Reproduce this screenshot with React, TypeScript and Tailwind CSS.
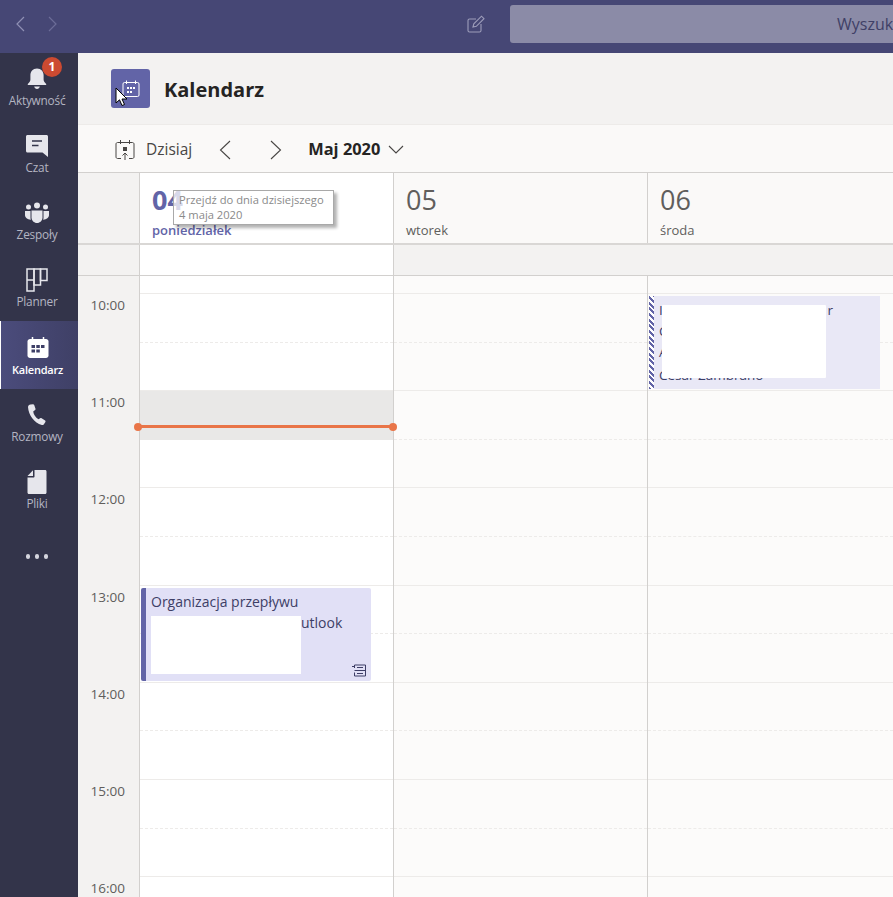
import type { ReactNode } from "react";

const font = "font-['Open_Sans','Noto_Sans',sans-serif]";

function BellIcon() {
  return (
    <svg width="24" height="24" viewBox="0 0 24 24" fill="#e6e6ec">
      <path d="M12 1.500c-4.200 0-6.600 3-6.600 6.800v4.200c0 1.600-1 2.800-2.400 4.200-.6.600-.3 1.300.5 1.300h17c.8 0 1.100-.7.500-1.300-1.400-1.400-2.400-2.600-2.400-4.200V8.300c0-3.800-2.400-6.800-6.600-6.800z" />
      <path d="M9.200 19.500h5.600c-.3 1.500-1.400 2.500-2.800 2.500s-2.500-1-2.800-2.500z" />
    </svg>
  );
}

function ChatIcon() {
  return (
    <svg width="24" height="24" viewBox="0 0 24 24">
      <path d="M2.500 1h19c.8 0 1.500.7 1.500 1.500V23l-5.500-4.500h-15c-.8 0-1.500-.7-1.500-1.500V2.500C1 1.700 1.700 1 2.500 1z" fill="#e6e6ec" />
      <path d="M7 7h10M7 11.500h6.500" stroke="#33344a" strokeWidth="1.500" />
    </svg>
  );
}

function TeamsIcon() {
  return (
    <svg width="26" height="22" viewBox="0 0 26 22" fill="#e6e6ec">
      <circle cx="13" cy="3.500" r="3" />
      <circle cx="4.500" cy="5" r="2.500" />
      <circle cx="21.500" cy="5" r="2.500" />
      <path d="M7.500 8.500h11v7c0 3-2.500 5.500-5.500 5.500s-5.500-2.500-5.500-5.500z" />
      <path d="M1 9h5.500v6.500c0 .8.100 1.500.4 2.200C3.500 17.800 1 15.500 1 13z" />
      <path d="M25 9h-5.500v6.500c0 .8-.1 1.500-.4 2.200 3.400.1 5.900-2.200 5.900-4.700z" />
    </svg>
  );
}

function PlannerIcon() {
  return (
    <svg width="22" height="24" viewBox="0 0 22 24" fill="none" stroke="#e6e6ec" strokeWidth="1.500">
      <rect x="1" y="1" width="7" height="22" />
      <path d="M1 12h7" />
      <rect x="8" y="1" width="6.500" height="16" />
      <rect x="14.500" y="1" width="6.500" height="11.500" />
    </svg>
  );
}

function CalendarIcon() {
  return (
    <svg width="22" height="22" viewBox="0 0 22 22">
      <path d="M3 2h16c1.300 0 2.500 1.200 2.500 2.500v14c0 1.300-1.200 2.500-2.500 2.500H3c-1.300 0-2.500-1.200-2.500-2.500v-14C.500 3.200 1.700 2 3 2z" fill="#ffffff" />
      <path d="M5.500 0v3M16.500 0v3" stroke="#ffffff" strokeWidth="1.500" />
      <path d="M4.500 8h3.500v3H4.500zM9.300 8h3.500v3H9.300zM14 8h3.500v3H14zM4.500 12.500h3.500v3H4.500zM9.300 12.500h3.500v3H9.300z" fill="#3d3e66" />
    </svg>
  );
}

function PhoneIcon() {
  return (
    <svg width="20" height="22" viewBox="0 0 20 22" fill="#e6e6ec">
      <path d="M3.500.500 6 .200c.6 0 1 .3 1.200.8l1.300 3.700c.2.500 0 1-.4 1.300L6.200 7.500c.4 3 2.300 6 5.200 7.800l1.800-1.100c.4-.3 1-.3 1.400 0l3.500 2.300c.5.300.6.900.3 1.400l-1.500 2.300c-.5.700-1.300 1-2.100.8C7.300 18.900 1.500 11 1 3c0-1.200 1.200-2.300 2.500-2.500z" />
    </svg>
  );
}

function FileIcon() {
  return (
    <svg width="20" height="24" viewBox="0 0 20 24" fill="#e6e6ec">
      <path d="M7.500 0H18c1 0 1.500.6 1.500 1.500v21c0 .9-.5 1.500-1.500 1.500H2c-1 0-1.500-.6-1.500-1.500V7.500h6c.6 0 1-.4 1-1z" />
      <path d="M6 .300V6H.500z" />
    </svg>
  );
}

function NavItem({ icon, label, active }: { icon: ReactNode; label: string; active?: boolean }) {
  return (
    <div
      className={
        active
          ? "flex h-[68px] flex-col items-center justify-center border-l border-white bg-gradient-to-r from-[#4b4c7c] to-[#3f4066] pr-[4px] text-white"
          : "flex h-[67px] flex-col items-center justify-center pr-[4px] text-[#b4b4c2]"
      }
    >
      <div className="flex h-[28px] items-center justify-center">{icon}</div>
      <span className={`leading-[15px] tracking-[-0.2px] ${active ? "text-[11px] font-semibold" : "text-[11.800px]"}`}>
        {label}
      </span>
    </div>
  );
}

function DayHeader({ num, name, today, last }: { num: string; name: string; today?: boolean; last?: boolean }) {
  return (
    <div
      className={
        today
          ? "w-[254px] shrink-0 border-r border-[#d2d0ce] bg-white pl-3 pt-[9px] text-[#6264a7]"
          : `min-w-0 flex-1 pl-3 pt-[9px] text-[#605e5c] ${last ? "" : "border-r border-[#d2d0ce]"}`
      }
    >
      <div className={`text-[27px] leading-[36px] ${today ? "font-bold" : "font-medium"}`}>{num}</div>
      <div className={`mt-[4px] text-[13px] leading-[17px] ${today ? "font-semibold" : ""}`}>{name}</div>
    </div>
  );
}

const hours = ["10:00", "11:00", "12:00", "13:00", "14:00", "15:00", "16:00"];
const slots = Array.from({ length: 13 }, (_, i) => i);

function DayColumn({ children, today, grow }: { children?: ReactNode; today?: boolean; grow?: boolean }) {
  return (
    <div
      className={`relative ${grow ? "min-w-0 flex-1" : "w-[254px] shrink-0 border-r border-[#d2d0ce]"} ${
        today ? "z-10 bg-white" : "bg-[#fcfbfa]"
      }`}
    >
      <div className="h-[18px] border-b border-[#edebe9]" />
      {slots.map((i) => (
        <div
          key={i}
          className={`h-[48.620px] border-b border-[#edebe9] ${i % 2 === 0 ? "border-dashed" : "border-solid"}`}
        />
      ))}
      {children}
    </div>
  );
}

export default function App() {
  return (
    <div className={`flex h-[897px] w-[893px] flex-col overflow-hidden bg-[#f3f2f1] ${font}`}>
      {/* top bar */}
      <div className="flex h-[53px] shrink-0 items-center bg-[#464775] pb-[5px]">
        <div className="ml-[14px] flex items-center gap-[21px]">
          <svg width="12" height="16" viewBox="0 0 12 16" fill="none" stroke="#8f90b4" strokeWidth="1.200">
            <path d="M10 1 3 8l7 7" />
          </svg>
          <svg width="12" height="16" viewBox="0 0 12 16" fill="none" stroke="#6c6d98" strokeWidth="1.200">
            <path d="m2 1 7 7-7 7" />
          </svg>
        </div>
        <svg className="ml-[407px]" width="19" height="18" viewBox="0 0 19 18" fill="none" stroke="#9d9dba" strokeWidth="1.100">
          <path d="M15 9v6.500c0 .8-.6 1.500-1.500 1.500h-10C2.600 17 2 16.300 2 15.500v-10C2 4.600 2.600 4 3.500 4H10" />
          <path d="M7 12l.8-3.200L15.500 1.200 18 3.700l-7.700 7.600z" />
        </svg>
        <div className="ml-[25px] flex h-[38px] min-w-0 flex-1 items-center rounded-l-[3px] bg-[#8b8ba7] pl-[327px]">
          <span className="whitespace-nowrap text-[16px] text-[#3f4066]">Wyszuk</span>
        </div>
      </div>

      <div className="flex min-h-0 flex-1">
        {/* left rail */}
        <nav className="flex w-[78px] shrink-0 flex-col bg-[#33344a]">
          <div className="relative">
            <NavItem icon={<BellIcon />} label="Aktywność" />
            <span className="absolute left-[42px] top-[4px] flex h-[20px] w-[20px] items-center justify-center rounded-full bg-[#cc4a31] text-[12px] font-bold text-white">
              1
            </span>
          </div>
          <NavItem icon={<ChatIcon />} label="Czat" />
          <NavItem icon={<TeamsIcon />} label="Zespoły" />
          <NavItem icon={<PlannerIcon />} label="Planner" />
          <NavItem icon={<CalendarIcon />} label="Kalendarz" active />
          <NavItem icon={<PhoneIcon />} label="Rozmowy" />
          <NavItem icon={<FileIcon />} label="Pliki" />
          <div className="flex h-[67px] items-center justify-center gap-[4.500px] pr-[4px]">
            <span className="h-[4.500px] w-[4.500px] rounded-full bg-[#d5d5de]" />
            <span className="h-[4.500px] w-[4.500px] rounded-full bg-[#d5d5de]" />
            <span className="h-[4.500px] w-[4.500px] rounded-full bg-[#d5d5de]" />
          </div>
        </nav>

        <main className="relative flex min-w-0 flex-1 flex-col">
          {/* page title */}
          <div className="flex h-[72px] shrink-0 items-center border-b border-[#edebe9] pl-[33px]">
            <div className="flex h-[39px] w-[39px] items-center justify-center rounded-[3px] bg-[#6264a7]">
              <svg width="18" height="18" viewBox="0 0 18 18" fill="none" stroke="#ffffff" strokeWidth="1">
                <rect x="1" y="2.500" width="16" height="14" rx="1.500" />
                <path d="M4.500 .500v3.500M13.500 .500v3.500" />
                <path d="M5 7h2v2H5zM8 7h2v2H8zM11 7h2v2h-2zM5 11h2v2H5zM8 11h2v2H8z" fill="#ffffff" stroke="none" />
              </svg>
            </div>
            <h1 className="ml-[14px] mt-[2px] text-[20px] font-bold text-[#252423]">Kalendarz</h1>
          </div>

          {/* toolbar */}
          <div className="flex h-[48px] shrink-0 items-center border-b border-[#d2d0ce] bg-[#faf9f8] pl-[37px] pt-[2px] text-[#252423]">
            <svg width="20" height="22" viewBox="0 0 20 22" fill="none" stroke="#484644" strokeWidth="1">
              <path d="M6 3.500H2.500c-.8 0-1.500.7-1.500 1.500v13c0 .8.700 1.500 1.500 1.500H6M14 19.500h3.500c.8 0 1.500-.7 1.500-1.500V5c0-.8-.7-1.500-1.500-1.500H14M6 3.500h8" />
              <path d="M5.500 1v4M14.500 1v4M10 21v-7M7.500 16.500 10 14l2.500 2.500" />
              <rect x="8" y="8" width="4" height="4" fill="#484644" stroke="none" />
            </svg>
            <span className="ml-[11px] text-[15.500px] text-[#484644]">Dzisiaj</span>
            <svg className="ml-[27px]" width="12" height="20" viewBox="0 0 12 20" fill="none" stroke="#484644" strokeWidth="1.100">
              <path d="M11 1 1.500 10 11 19" />
            </svg>
            <svg className="ml-[39px]" width="12" height="20" viewBox="0 0 12 20" fill="none" stroke="#484644" strokeWidth="1.100">
              <path d="m1 1 9.500 9L1 19" />
            </svg>
            <span className="ml-[26px] text-[16.400px] font-bold">Maj 2020</span>
            <svg className="ml-[8px]" width="16" height="9" viewBox="0 0 16 9" fill="none" stroke="#484644" strokeWidth="1.100">
              <path d="m1 1 7 7 7-7" />
            </svg>
          </div>

          {/* day headers */}
          <div className="flex h-[72px] shrink-0 border-b-2 border-[#d9d7d5] bg-[#faf9f8]">
            <div className="w-[62px] shrink-0 border-r border-[#d2d0ce] bg-[#f3f2f1]" />
            <DayHeader num="04" name="poniedziałek" today />
            <div className="flex w-[254px] shrink-0">
              <DayHeader num="05" name="wtorek" />
            </div>
            <DayHeader num="06" name="środa" last />
          </div>

          {/* all-day row */}
          <div className="flex h-[31px] shrink-0 border-b border-[#d2d0ce]">
            <div className="w-[62px] shrink-0 border-r border-[#d2d0ce]" />
            <div className="w-[254px] shrink-0 border-r border-[#d2d0ce] bg-white" />
            <div className="flex-1 bg-[#f3f2f1]" />
          </div>

          {/* time grid */}
          <div className="flex min-h-0 flex-1 overflow-hidden">
            <div className="w-[62px] shrink-0 border-r border-[#d2d0ce] bg-[#f3f2f1] pt-[18px] text-[#605e5c]">
              {hours.map((h) => (
                <div key={h} className="h-[97.240px] pr-[14px] pt-[1px] text-right text-[13.500px] leading-[20px]">
                  {h}
                </div>
              ))}
            </div>

            <DayColumn today>
              <div className="absolute inset-x-0 top-[115px] h-[49px] bg-[#e9e8e7]" />
              <div className="absolute left-0 right-0 top-[149px] h-[3px] bg-[#e97548]" />
              <div className="absolute left-[-6px] top-[146.500px] h-[8px] w-[8px] rounded-full bg-[#e97548]" />
              <div className="absolute right-[-4px] top-[146.500px] h-[8px] w-[8px] rounded-full bg-[#e97548]" />

              <div className="absolute left-[1px] top-[312px] h-[93px] w-[230px] rounded-[2px] border-l-[5px] border-[#6264a7] bg-[#e1e0f6] pl-[5px] pt-[3px] text-[14px] font-medium leading-[21px] text-[#3d3e66]">
                <div>Organizacja przepływu</div>
                <div className="pl-[150px]">utlook</div>
                <div className="absolute left-[5px] top-[28px] h-[58px] w-[150px] bg-white" />
                <svg className="absolute bottom-[4px] right-[5px]" width="14" height="13" viewBox="0 0 14 13" fill="none" stroke="#3d3e66" strokeWidth="1">
                  <path d="M2.500 1h11v11h-11V8.500M2.500 1v3M5 3.500h6M2.500 6.500h11M5 9.500h6" />
                  <path d="M0 2.500h3" />
                </svg>
              </div>
            </DayColumn>

            <DayColumn />

            <DayColumn grow>
              <div className="absolute left-[1px] top-[20px] h-[93px] w-[231px] bg-[#e9e8f6] pl-[10px] pt-[4px] text-[13.500px] leading-[21px] text-[#3d3e66]">
                <div className="absolute inset-y-0 left-0 w-[5px] bg-[repeating-linear-gradient(45deg,#6264a7_0px,#6264a7_2px,#ffffff_2px,#ffffff_4px)]" />
                <div className="flex w-[174px] justify-between font-medium">
                  <span>I</span>
                  <span>r</span>
                </div>
                <div>C</div>
                <div>A</div>
                <div className="mt-[2px]">Cesar Zambrano</div>
                <div className="absolute left-[13px] top-[9px] h-[73px] w-[164px] rounded-[1px] bg-white" />
              </div>
            </DayColumn>
          </div>

          {/* native tooltip */}
          <div className="absolute left-[95px] top-[137px] z-20 h-[35px] w-[161px] border border-[#a9a9a9] bg-white/75 pl-[5px] pt-[1px] text-[11.200px] leading-[15px] text-[#8a8a8a] shadow-[3px_3px_3px_rgba(0,0,0,0.3)]">
            <div className="whitespace-nowrap">Przejdź do dnia dzisiejszego</div>
            <div>4 maja 2020</div>
          </div>

          {/* mouse pointer */}
          <svg className="absolute left-[37px] top-[34px] z-20" width="14" height="20" viewBox="0 0 14 20">
            <path d="M1 1v15l3.500-3.200L7 18.500l2.500-1-2.500-5.500h5z" fill="#ffffff" stroke="#000000" strokeWidth="1" />
          </svg>
        </main>
      </div>
    </div>
  );
}
